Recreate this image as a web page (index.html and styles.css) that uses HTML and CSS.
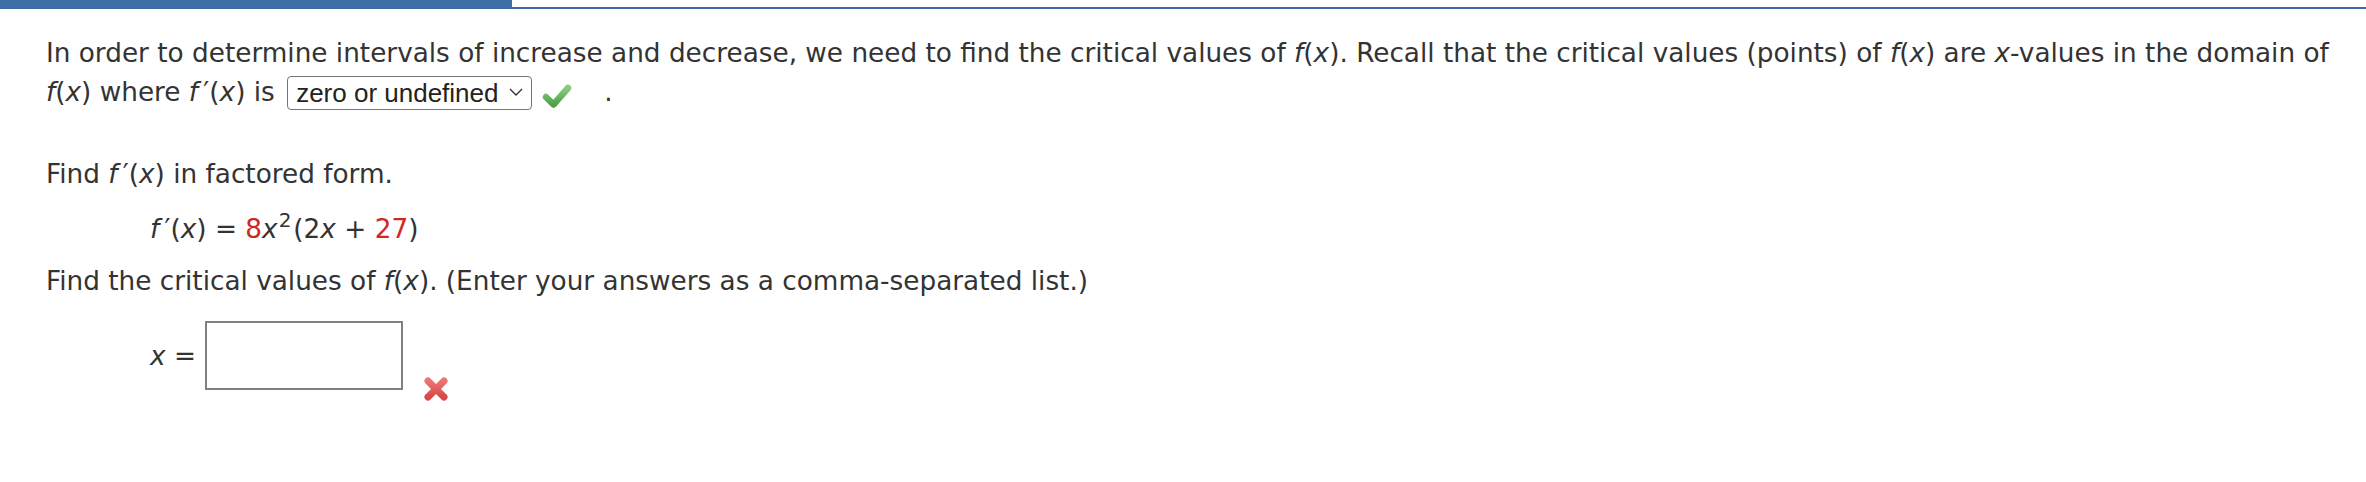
FILE: index.html
```html
<!DOCTYPE html>
<html>
<head>
<meta charset="utf-8">
<link rel="stylesheet" href="styles.css">
</head>
<body>
<div class="topbar"><div class="tab"></div><div class="rule"></div></div>
<div class="content">
  <p class="para">In order to determine intervals of increase and decrease, we need to find the critical values of <i>f</i>(<i>x</i>). Recall that the critical values (points) of <i>f</i>(<i>x</i>) are <i>x</i>-values in the domain of <i>f</i>(<i>x</i>) where <i>f</i>&#8201;′(<i>x</i>) is <span class="select"><span class="select-text">zero or undefined</span><svg class="chev" width="14" height="8" viewBox="0 0 14 8"><path d="M1 1 L7 7 L13 1" fill="none" stroke="#333" stroke-width="1.4"/></svg></span><svg class="check" width="30" height="26" viewBox="0 0 30 26"><defs><linearGradient id="g" x1="0" y1="0" x2="0" y2="1"><stop offset="0" stop-color="#86cc7e"/><stop offset="1" stop-color="#4ea24a"/></linearGradient></defs><path d="M4 14 L11.5 21.5 L26 5" fill="none" stroke="url(#g)" stroke-width="6.5" stroke-linecap="round" stroke-linejoin="round"/></svg><span class="dot">.</span></p>
  <p class="find1">Find <i>f</i>&#8201;′(<i>x</i>) in factored form.</p>
  <p class="eq"><i>f</i>&#8201;′(<i>x</i>) = <span class="red">8</span><i>x</i><sup>2</sup>(2<i>x</i> + <span class="red">27</span>)</p>
  <p class="find2">Find the critical values of <i>f</i>(<i>x</i>). (Enter your answers as a comma-separated list.)</p>
  <div class="answer">
    <span class="label"><i>x</i> =</span>
    <span class="input"></span>
    <svg class="cross" width="26" height="26" viewBox="0 0 26 26"><defs><linearGradient id="r" x1="0" y1="0" x2="0" y2="1"><stop offset="0" stop-color="#ee7474"/><stop offset="1" stop-color="#d84848"/></linearGradient></defs><path d="M5 5 L21 21 M21 5 L5 21" fill="none" stroke="url(#r)" stroke-width="7" stroke-linecap="round"/></svg>
  </div>
</div>
</body>
</html>
```
FILE: styles.css
```css
html, body {
  margin: 0;
  padding: 0;
  background: #fff;
}
body {
  font-family: "DejaVu Sans", Verdana, sans-serif;
  font-size: 26.3px;
  color: #333;
}
.topbar {
  display: flex;
  align-items: flex-end;
  height: 9px;
}
.tab {
  width: 512px;
  height: 9px;
  background: #3f6ea5;
}
.rule {
  flex: 1;
  height: 2px;
  background: #3f6ea5;
}
.content {
  padding: 25px 20px 0 46px;
}
p {
  margin: 0;
  line-height: 39px;
}
.para {
  width: 2300px;
}
.select {
  display: inline-flex;
  align-items: center;
  box-sizing: border-box;
  height: 34px;
  width: 245px;
  margin-left: 4px;
  padding: 0 8px 0 8px;
  border: 1px solid #767676;
  border-radius: 4px;
  font-family: "Liberation Sans", Arial, sans-serif;
  font-size: 26px;
  color: #222;
  vertical-align: -1px;
  line-height: 1;
}
.select-text {
  flex: 1;
}
.chev {
  margin-top: -2px;
}
.check {
  vertical-align: -8px;
  margin-left: 10px;
}
.dot {
  margin-left: 32px;
}
.find1 {
  margin-top: 43px;
}
.eq {
  margin-top: 16px;
  padding-left: 104px;
}
.red {
  color: #d0281e;
}
sup {
  font-size: 20px;
  line-height: 0;
  vertical-align: 11px;
  margin: 0 2px 0 1px;
}
.find2 {
  margin-top: 13px;
}
.answer {
  display: flex;
  align-items: flex-start;
  margin-top: 20px;
  padding-left: 104px;
}
.label {
  line-height: 39px;
  margin-top: 16px;
  margin-right: 9px;
}
.input {
  box-sizing: border-box;
  width: 198px;
  height: 69px;
  border: 2px solid #808080;
  background: #fff;
}
.cross {
  margin-left: 20px;
  margin-top: 55px;
}
```
